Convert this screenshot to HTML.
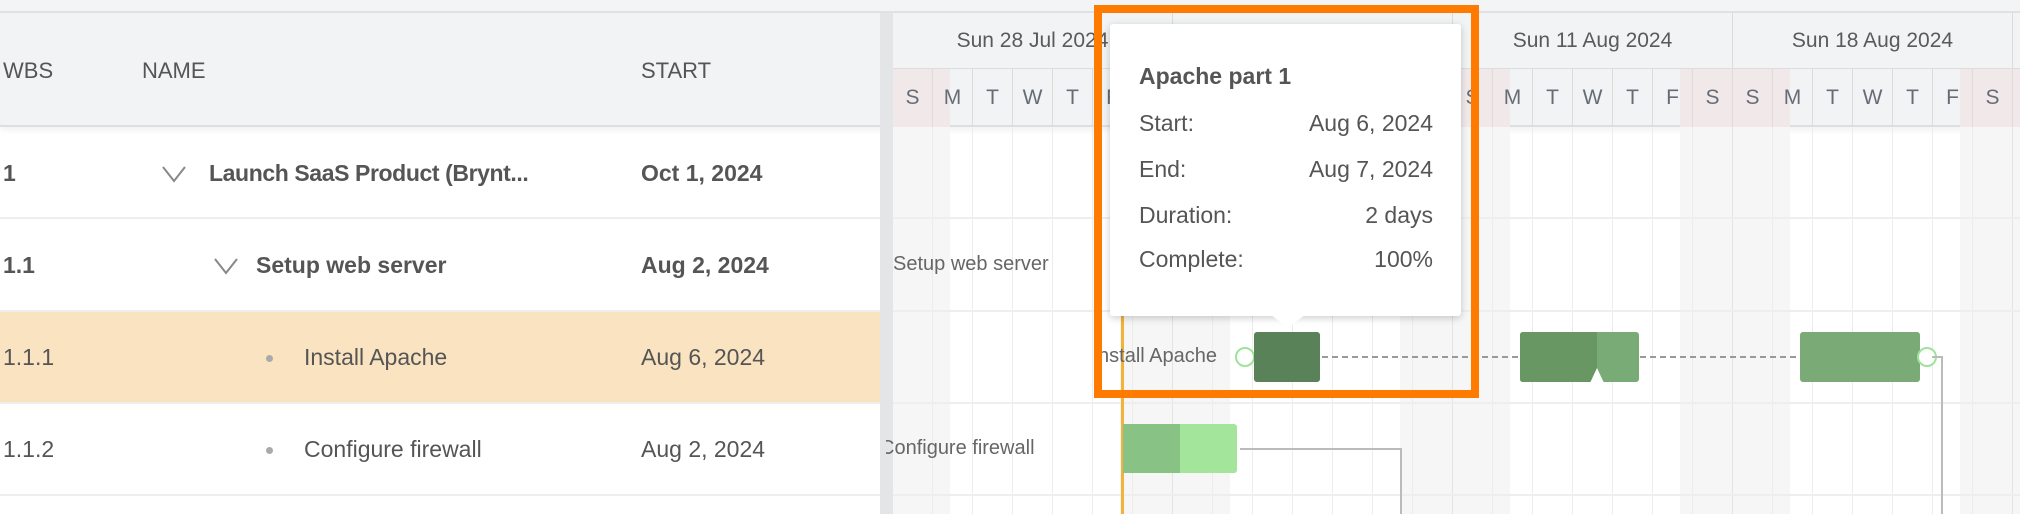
<!DOCTYPE html>
<html><head><meta charset="utf-8"><style>
*{margin:0;padding:0;box-sizing:border-box}
body{width:2020px;height:514px;overflow:hidden;background:#fff;font-family:"Liberation Sans",sans-serif;position:relative;color:#555}
.a{position:absolute}
.hd{color:#555;font-size:22px}
.cell{font-size:23px;color:#555;white-space:nowrap}
.b{font-weight:bold}
.dl{position:absolute;top:69px;height:58px;width:40px;text-align:center;line-height:58px;font-size:21px;color:#666c76;border-right:1px solid #dcdcdc}
.vl{position:absolute;top:127px;height:387px;width:1px;background:#ececec}
.hl{position:absolute;left:0;width:2020px;height:2px;background:#eeeeee}
.tt{font-size:23px;color:#555}
.wk{position:absolute;top:13px;width:280px;height:56px;line-height:56px;text-align:center;font-size:21px;color:#5a5a5a;border-right:1px solid #dcdcdc}
</style></head><body>
<div class="a" style="left:0;top:0;width:2020px;height:13px;background:#f3f4f5;border-bottom:2px solid #e2e2e2"></div>
<div class="a" style="left:0;top:13px;width:2020px;height:114px;background:#f2f3f4;border-bottom:2px solid #dedede;box-shadow:0 3px 6px rgba(0,0,0,.06)"></div>
<div class="a hd" style="left:3px;top:58px">WBS</div>
<div class="a hd" style="left:142px;top:58px">NAME</div>
<div class="a hd" style="left:641px;top:58px">START</div>
<div class="a" style="left:0;top:311px;width:880px;height:92px;background:#fae3c0"></div>
<div class="hl" style="top:217px"></div>
<div class="hl" style="top:310px"></div>
<div class="hl" style="top:402px"></div>
<div class="hl" style="top:494px"></div>
<div class="a cell b" style="left:3px;top:160px">1</div>
<svg class="a" style="left:161px;top:164px" width="26" height="20"><path d="M2 3 L13 17 L24 3" fill="none" stroke="#888" stroke-width="2"/></svg>
<div class="a cell b" style="left:209px;top:160px;letter-spacing:-0.4px">Launch SaaS Product (Brynt...</div>
<div class="a cell b" style="left:641px;top:160px">Oct 1, 2024</div>
<div class="a cell b" style="left:3px;top:252px">1.1</div>
<svg class="a" style="left:213px;top:256px" width="26" height="20"><path d="M2 3 L13 17 L24 3" fill="none" stroke="#888" stroke-width="2"/></svg>
<div class="a cell b" style="left:256px;top:252px">Setup web server</div>
<div class="a cell b" style="left:641px;top:252px">Aug 2, 2024</div>
<div class="a cell" style="left:3px;top:344px">1.1.1</div>
<div class="a" style="left:266px;top:355px;width:7px;height:7px;border-radius:50%;background:#aaa"></div>
<div class="a cell" style="left:304px;top:344px">Install Apache</div>
<div class="a cell" style="left:641px;top:344px">Aug 6, 2024</div>
<div class="a cell" style="left:3px;top:436px">1.1.2</div>
<div class="a" style="left:266px;top:447px;width:7px;height:7px;border-radius:50%;background:#aaa"></div>
<div class="a cell" style="left:304px;top:436px">Configure firewall</div>
<div class="a cell" style="left:641px;top:436px">Aug 2, 2024</div>
<div class="a" style="left:880px;top:13px;width:13px;height:501px;background:#e4e5e7"></div>
<div class="a" style="left:893px;top:69px;width:57px;height:445px;background:#f6f6f6"></div>
<div class="a" style="left:1120px;top:69px;width:110px;height:445px;background:#f6f6f6"></div>
<div class="a" style="left:1400px;top:69px;width:110px;height:445px;background:#f6f6f6"></div>
<div class="a" style="left:1680px;top:69px;width:110px;height:445px;background:#f6f6f6"></div>
<div class="a" style="left:1960px;top:69px;width:60px;height:445px;background:#f6f6f6"></div>
<div class="a" style="left:893px;top:69px;width:57px;height:58px;background:#f1e9e9"></div>
<div class="a" style="left:1120px;top:69px;width:110px;height:58px;background:#f1e9e9"></div>
<div class="a" style="left:1400px;top:69px;width:110px;height:58px;background:#f1e9e9"></div>
<div class="a" style="left:1680px;top:69px;width:110px;height:58px;background:#f1e9e9"></div>
<div class="a" style="left:1960px;top:69px;width:60px;height:58px;background:#f1e9e9"></div>
<div class="a" style="left:893px;top:68px;width:1127px;height:1px;background:#dcdcdc"></div>
<div class="wk" style="left:893px">Sun 28 Jul 2024</div>
<div class="wk" style="left:1173px">Sun 4 Aug 2024</div>
<div class="wk" style="left:1453px">Sun 11 Aug 2024</div>
<div class="wk" style="left:1733px">Sun 18 Aug 2024</div>
<div class="dl" style="left:893px">S</div><div class="dl" style="left:933px">M</div><div class="dl" style="left:973px">T</div><div class="dl" style="left:1013px">W</div><div class="dl" style="left:1053px">T</div><div class="dl" style="left:1093px">F</div><div class="dl" style="left:1133px">S</div>
<div class="dl" style="left:1173px">S</div><div class="dl" style="left:1213px">M</div><div class="dl" style="left:1253px">T</div><div class="dl" style="left:1293px">W</div><div class="dl" style="left:1333px">T</div><div class="dl" style="left:1373px">F</div><div class="dl" style="left:1413px">S</div>
<div class="dl" style="left:1453px">S</div><div class="dl" style="left:1493px">M</div><div class="dl" style="left:1533px">T</div><div class="dl" style="left:1573px">W</div><div class="dl" style="left:1613px">T</div><div class="dl" style="left:1653px">F</div><div class="dl" style="left:1693px">S</div>
<div class="dl" style="left:1733px">S</div><div class="dl" style="left:1773px">M</div><div class="dl" style="left:1813px">T</div><div class="dl" style="left:1853px">W</div><div class="dl" style="left:1893px">T</div><div class="dl" style="left:1933px">F</div><div class="dl" style="left:1973px">S</div>
<div class="vl" style="left:932px"></div><div class="vl" style="left:972px"></div><div class="vl" style="left:1012px"></div><div class="vl" style="left:1052px"></div><div class="vl" style="left:1092px"></div><div class="vl" style="left:1132px"></div><div class="vl" style="left:1172px;background:#e4e4e4"></div>
<div class="vl" style="left:1212px"></div><div class="vl" style="left:1252px"></div><div class="vl" style="left:1292px"></div><div class="vl" style="left:1332px"></div><div class="vl" style="left:1372px"></div><div class="vl" style="left:1412px"></div><div class="vl" style="left:1452px;background:#e4e4e4"></div>
<div class="vl" style="left:1492px"></div><div class="vl" style="left:1532px"></div><div class="vl" style="left:1572px"></div><div class="vl" style="left:1612px"></div><div class="vl" style="left:1652px"></div><div class="vl" style="left:1692px"></div><div class="vl" style="left:1732px;background:#e4e4e4"></div>
<div class="vl" style="left:1772px"></div><div class="vl" style="left:1812px"></div><div class="vl" style="left:1852px"></div><div class="vl" style="left:1892px"></div><div class="vl" style="left:1932px"></div><div class="vl" style="left:1972px"></div><div class="vl" style="left:2012px;background:#e4e4e4"></div>
<div class="a" style="left:893px;top:217px;width:1127px;height:2px;background:#eeeeee"></div>
<div class="a" style="left:893px;top:310px;width:1127px;height:2px;background:#eeeeee"></div>
<div class="a" style="left:893px;top:402px;width:1127px;height:2px;background:#eeeeee"></div>
<div class="a" style="left:893px;top:494px;width:1127px;height:2px;background:#eeeeee"></div>
<div class="a" style="left:1121px;top:127px;width:3px;height:387px;background:#f3b23a"></div>
<div class="a" style="left:893px;top:253px;font-size:20px;color:#666;white-space:nowrap">Setup web server</div>
<div class="a" style="left:1010px;top:345px;width:207px;text-align:right;font-size:20px;color:#666;white-space:nowrap">Install Apache</div>
<div class="a" style="left:886px;top:437px;width:200px;font-size:20px;color:#666;white-space:nowrap;overflow:hidden"><span style="margin-left:-6px">Configure firewall</span></div>
<svg class="a" style="left:0;top:0" width="2020" height="514">
 <line x1="1322" y1="357" x2="1520" y2="357" stroke="#999" stroke-width="2" stroke-dasharray="6,4"/>
 <line x1="1640" y1="357" x2="1800" y2="357" stroke="#999" stroke-width="2" stroke-dasharray="6,4"/>
 <circle cx="1245" cy="357" r="9" fill="#fff" stroke="#9fe39a" stroke-width="2"/>
 <rect x="1254" y="332" width="66" height="50" rx="3" fill="#5a8259"/>
 <rect x="1520" y="332" width="119" height="50" rx="3" fill="#79ab77"/>
 <path d="M1523 332 H1597 V382 H1523 Q1520 382 1520 379 V335 Q1520 332 1523 332Z" fill="#689764"/>
 <path d="M1590 383 L1597 368 L1604 383Z" fill="#fff"/>
 <rect x="1800" y="332" width="120" height="50" rx="3" fill="#7aab76"/>
 <circle cx="1927" cy="357" r="9" fill="#fff" stroke="#9fe39a" stroke-width="2"/>
 <polyline points="1932,357 1942,357 1942,514" fill="none" stroke="#bbb" stroke-width="2"/>
 <rect x="1123" y="424" width="114" height="49" rx="3" fill="#a3e59b"/>
 <rect x="1123" y="424" width="57" height="49" fill="#88c285"/>
 <polyline points="1240,449 1401,449 1401,514" fill="none" stroke="#bbb" stroke-width="2"/>
</svg>
<div class="a" style="left:1110px;top:24px;width:351px;height:292px;background:#fff;border-radius:3px;box-shadow:0 2px 8px rgba(0,0,0,.2)"></div>
<svg class="a" style="left:1270px;top:314px" width="36" height="16"><path d="M0 0 L18 14 L36 0Z" fill="#fff"/></svg>
<div class="a tt b" style="left:1139px;top:63px;color:#555">Apache part 1</div>
<div class="a tt" style="left:1139px;top:110px">Start:</div><div class="a tt" style="left:1233px;width:200px;text-align:right;top:110px">Aug 6, 2024</div>
<div class="a tt" style="left:1139px;top:156px">End:</div><div class="a tt" style="left:1233px;width:200px;text-align:right;top:156px">Aug 7, 2024</div>
<div class="a tt" style="left:1139px;top:202px">Duration:</div><div class="a tt" style="left:1233px;width:200px;text-align:right;top:202px">2 days</div>
<div class="a tt" style="left:1139px;top:246px">Complete:</div><div class="a tt" style="left:1233px;width:200px;text-align:right;top:246px">100%</div>
<div class="a" style="left:1094px;top:5px;width:385px;height:393px;border:8px solid #ff7b00"></div>
</body></html>
